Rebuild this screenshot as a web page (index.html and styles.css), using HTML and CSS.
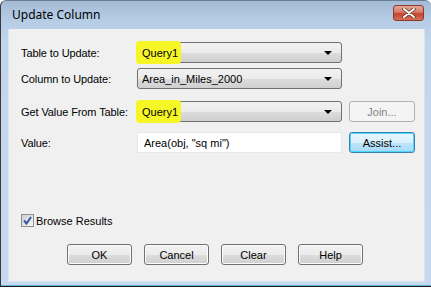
FILE: index.html
```
<!DOCTYPE html>
<html>
<head>
<meta charset="utf-8">
<link rel="stylesheet" href="styles.css">
</head>
<body>
<div class="window">
  <div class="titlebar">
    <span class="title">Update Column</span>
    <span class="close"><svg width="14" height="10" viewBox="0 0 14 10"><path d="M2 1 L12 9 M12 1 L2 9" stroke="#5a2a22" stroke-width="3.4" stroke-linecap="round"/><path d="M2 1 L12 9 M12 1 L2 9" stroke="#ffffff" stroke-width="2" stroke-linecap="round"/></svg></span>
  </div>
  <div class="client">
    <div class="form">
      <div class="row r1">
        <span class="label">Table to Update:</span>
        <div class="combo"><span class="hl">Query1</span><span class="arrow"></span></div>
      </div>
      <div class="row r2">
        <span class="label">Column to Update:</span>
        <div class="combo"><span class="val">Area_in_Miles_2000</span><span class="arrow"></span></div>
      </div>
      <div class="row r3">
        <span class="label">Get Value From Table:</span>
        <div class="combo"><span class="hl">Query1</span><span class="arrow"></span></div>
        <button class="btn side disabled">Join...</button>
      </div>
      <div class="row r4">
        <span class="label">Value:</span>
        <div class="textbox">Area(obj, "sq mi")</div>
        <button class="btn side default">Assist...</button>
      </div>
    </div>
    <label class="check"><span class="box"><svg width="9" height="9" viewBox="0 0 9 9"><path d="M1 4.5 L3.5 7.5 L8 1" fill="none" stroke="#3a55a0" stroke-width="2"/></svg></span>Browse Results</label>
    <div class="buttons">
      <button class="btn">OK</button>
      <button class="btn">Cancel</button>
      <button class="btn">Clear</button>
      <button class="btn">Help</button>
    </div>
  </div>
</div>
</body>
</html>
```
FILE: styles.css
```
html, body {
  margin: 0;
  padding: 0;
  background: #ffffff;
}
body {
  font-family: "Liberation Sans", Arial, sans-serif;
  font-size: 11px;
  color: #000;
}
.window {
  width: 431px;
  height: 287px;
  box-sizing: border-box;
  border-left: 1px solid #3a3a3a;
  border-top: 1px solid #6b7d93;
  border-bottom: 1px solid #1d1d1d;
  border-radius: 6px 6px 0 0;
  background: linear-gradient(#a4bbd7 0px, #b7cde6 20px, #c1d5ec 40px, #c6d9ef 100%);
  display: flex;
  flex-direction: column;
  padding: 0 6px 4px 7px;
  box-shadow: inset 0 -1px 0 #5fb4d6;
}
.titlebar {
  height: 28px;
  display: flex;
  align-items: center;
  justify-content: space-between;
}
.title {
  font-family: "Noto Sans", sans-serif;
  font-size: 12px;
  margin-left: 4px;
  margin-top: -2px;
  color: #000;
}
.close {
  width: 31px;
  height: 16px;
  box-sizing: border-box;
  margin-top: -4px;
  margin-right: 1px;
  border: 1px solid #8a3a30;
  border-radius: 3px;
  background: linear-gradient(#e6a696 0%, #d57a66 45%, #c7432c 55%, #d4715a 100%);
  display: flex;
  align-items: center;
  justify-content: center;
}
.client {
  flex: 1;
  background: #f0f0f0;
  display: flex;
  flex-direction: column;
  padding: 0 0 0 12px;
  border: 1px solid #d9e4f1;
  border-top: none;
}
.form {
  display: flex;
  flex-direction: column;
}
.row {
  display: flex;
  align-items: center;
  height: 21px;
}
.r1 { margin-top: 13px; }
.r2 { margin-top: 5px; }
.r3 { margin-top: 12px; }
.r4 { margin-top: 10px; }
.label {
  width: 116px;
  flex: none;
  white-space: nowrap;
  letter-spacing: -0.1px;
}
.combo {
  width: 205px;
  height: 21px;
  box-sizing: border-box;
  border: 1px solid #707070;
  border-radius: 3px;
  background: linear-gradient(#f2f2f2 0%, #ebebeb 50%, #dddddd 51%, #cfcfcf 100%);
  display: flex;
  align-items: center;
  position: relative;
}
.val {
  margin-left: 4px;
}
.hl {
  position: absolute;
  left: -2px;
  top: -2px;
  height: 23px;
  width: 45px;
  box-sizing: border-box;
  padding-left: 6px;
  display: flex;
  align-items: center;
  background: #f6f526;
  border-radius: 4px;
}
.arrow {
  margin-left: auto;
  margin-right: 9px;
  width: 0;
  height: 0;
  border-left: 4px solid transparent;
  border-right: 4px solid transparent;
  border-top: 4px solid #000;
}
.textbox {
  width: 205px;
  height: 21px;
  box-sizing: border-box;
  border: 1px solid #e3e9ef;
  background: #fff;
  padding-left: 6px;
  display: flex;
  align-items: center;
}
.btn {
  width: 66px;
  height: 21px;
  box-sizing: border-box;
  border: 1px solid #707070;
  border-radius: 3px;
  background: linear-gradient(#f2f2f2 0%, #ebebeb 50%, #dddddd 51%, #cfcfcf 100%);
  font-family: "Liberation Sans", Arial, sans-serif;
  font-size: 11px;
  color: #000;
  padding: 0;
  box-shadow: inset 0 0 0 1px #fcfcfc;
}
.side {
  margin-left: 7px;
}
.disabled {
  border-color: #adb2b5;
  background: #f4f4f4;
  color: #838383;
  box-shadow: none;
}
.default {
  border-color: #3c7fb1;
  box-shadow: inset 0 0 0 1px #48d8fb;
  background: linear-gradient(#eaf6fd 0%, #d9f0fc 50%, #bee6fd 51%, #a7d9f5 100%);
}
.check {
  display: flex;
  align-items: center;
  margin-top: 61px;
  height: 13px;
}
.box {
  width: 13px;
  height: 13px;
  box-sizing: border-box;
  border: 1px solid #8e8f8f;
  background: linear-gradient(135deg, #cbcfd5, #f6f6f6);
  display: flex;
  align-items: center;
  justify-content: center;
  margin-right: 2px;
}
.buttons {
  display: flex;
  gap: 12px;
  margin-top: 17px;
  margin-left: 46px;
}
.buttons .btn {
  width: 65px;
}
```
